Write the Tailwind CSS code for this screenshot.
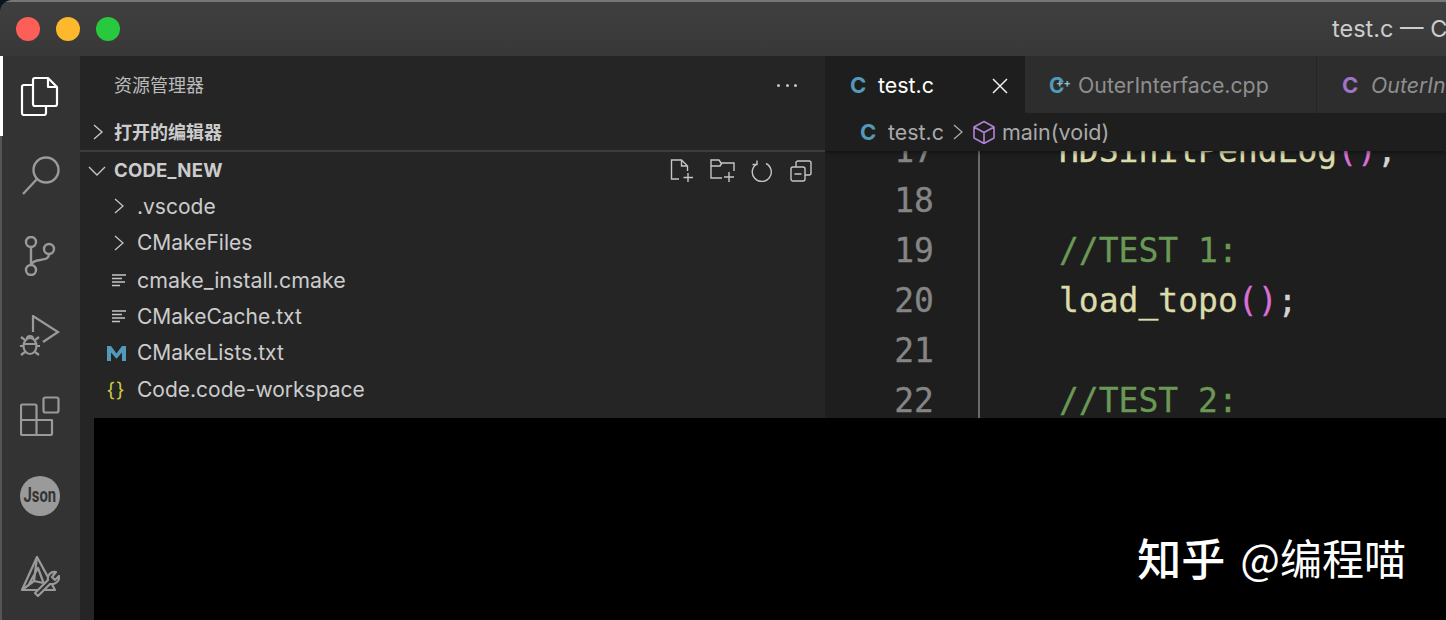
<!DOCTYPE html>
<html lang="zh">
<head>
    <meta charset="utf-8">
    <title>test.c — Code_new</title>
    <script src="https://cdn.jsdelivr.net/npm/@tailwindcss/browser@4"></script>
</head>
<body class="bg-[#0b1220] overflow-hidden">
    <div class="relative w-[1446px] h-[620px] overflow-hidden font-['Inter','Noto_Sans_CJK_SC',sans-serif]">
        <div class="flex flex-col h-full rounded-tl-[12px] overflow-hidden">

            <!-- title bar -->
            <div class="relative h-[56px] shrink-0 bg-gradient-to-b from-[#3f3f3f] to-[#383838] border-t-2 border-[#777] flex items-center">
                <div class="flex gap-[16px] pl-[16px]">
                    <span class="w-[24px] h-[24px] rounded-full bg-[#fb5f57]"></span>
                    <span class="w-[24px] h-[24px] rounded-full bg-[#fdb82e]"></span>
                    <span class="w-[24px] h-[24px] rounded-full bg-[#28c93f]"></span>
                </div>
                <span class="absolute left-[1332px] top-[13px] text-[23.500px] leading-[28px] text-[#cccccc] whitespace-nowrap">test.c — Code_new</span>
            </div>

            <div class="flex flex-1 min-h-0">
                <!-- activity bar -->
                <div class="w-[80px] shrink-0 bg-[#333333] border-l-2 border-[#555] flex flex-col text-[#9a9a9a]">
                    <div class="h-[80px] -ml-[2px] border-l-[3px] border-white flex items-center justify-center text-white">
                        <svg class="w-[40px] h-[40px] -ml-[3px]" viewBox="0 0 40 40" fill="none" stroke="currentColor" stroke-width="2.2" stroke-linejoin="round">
                            <path d="M15 2h13l9 9v17a2 2 0 0 1-2 2H15a2 2 0 0 1-2-2V4a2 2 0 0 1 2-2z"/>
                            <path d="M28 2v9h9"/>
                            <path d="M13 9H4a2 2 0 0 0-2 2v26a2 2 0 0 0 2 2h20a2 2 0 0 0 2-2v-7"/>
                        </svg>
                    </div>
                    <div class="h-[80px] -ml-[2px] flex items-center justify-center">
                        <svg class="w-[40px] h-[40px]" viewBox="0 0 40 40" fill="none" stroke="currentColor" stroke-width="2.4">
                            <circle cx="26" cy="14" r="12.5"/>
                            <path d="M17 23 3 38"/>
                        </svg>
                    </div>
                    <div class="h-[80px] -ml-[2px] flex items-center justify-center">
                        <svg class="w-[40px] h-[40px]" viewBox="0 0 40 40" fill="none" stroke="currentColor" stroke-width="2.4">
                            <circle cx="11" cy="6" r="5"/>
                            <circle cx="29" cy="13" r="5"/>
                            <circle cx="11" cy="34" r="5"/>
                            <path d="M11 11v18M29 18c0 5-4 5-9 6-5 .6-8 2-9 5"/>
                        </svg>
                    </div>
                    <div class="h-[80px] -ml-[2px] flex items-center justify-center">
                        <svg class="w-[40px] h-[42px]" viewBox="0 0 40 42" fill="none" stroke="currentColor" stroke-width="2.2">
                            <path d="M13 17V1l25 16-15 10"/>
                            <ellipse cx="10" cy="31" rx="6.5" ry="8"/>
                            <path d="M4 29h12M5 25 1 22M15 25l4-3M3.500 31H0M16.500 31H20M5 37l-4 3M15 37l4 3M7 24a3 3 0 0 1 6 0"/>
                        </svg>
                    </div>
                    <div class="h-[80px] -ml-[2px] flex items-center justify-center">
                        <svg class="w-[40px] h-[40px]" viewBox="0 0 40 40" fill="none" stroke="currentColor" stroke-width="2.2" stroke-linejoin="round">
                            <rect x="23.500" y="1.500" width="15" height="15" rx="2"/>
                            <path d="M2 8.500h13a1.500 1.500 0 0 1 1.500 1.500v14H1V10a1.500 1.500 0 0 1 1-1.500zM1 24h15.500v15H2.500A1.500 1.500 0 0 1 1 37.500zM16.500 24H32v13.500a1.500 1.500 0 0 1-1.500 1.500h-14z"/>
                        </svg>
                    </div>
                    <div class="h-[80px] -ml-[2px] flex items-center justify-center">
                        <div class="w-[40px] h-[40px] rounded-full bg-[#9a9a9a] flex items-center justify-center text-[#333] text-[19px] font-bold font-['Roboto',sans-serif]">
                            <span class="scale-x-[0.78] scale-y-[1.05]">Json</span>
                        </div>
                    </div>
                    <div class="h-[80px] -ml-[2px] flex items-center justify-center">
                        <svg class="w-[40px] h-[42px]" viewBox="0 0 40 42" fill="none" stroke="currentColor" stroke-width="2.2" stroke-linejoin="round">
                            <path d="M17 2 2 35h33z"/>
                            <path d="M17 2 14 26 2 35M14 26l14 3M9 29l9-16 6 16"/>
                            <path d="M15 38 28 25c-1-5 3-9 8-8l-4 5 3 3 4-4c1 5-4 9-9 8L18 41z" fill="#333"/>
                        </svg>
                    </div>
                </div>

                <!-- explorer -->
                <div class="w-[745px] shrink-0 bg-[#252526] flex flex-col text-[#cccccc]">
                    <div class="h-[58px] shrink-0 flex items-center justify-between pl-[34px] pr-[28px]">
                        <span class="text-[18px] text-[#bbbbbb]">资源管理器</span>
                        <span class="flex gap-[5.500px]">
                            <i class="w-[3px] h-[3px] rounded-full bg-[#c5c5c5]"></i>
                            <i class="w-[3px] h-[3px] rounded-full bg-[#c5c5c5]"></i>
                            <i class="w-[3px] h-[3px] rounded-full bg-[#c5c5c5]"></i>
                        </span>
                    </div>
                    <div class="h-[38px] shrink-0 flex items-center pl-[11px] gap-[9px] border-b-2 border-[#3c3c3c]">
                        <svg class="w-[14px] h-[16px]" viewBox="0 0 14 16" fill="none" stroke="#c5c5c5" stroke-width="1.400"><path d="M3 1l8 7-8 7"/></svg>
                        <span class="text-[18px] font-bold">打开的编辑器</span>
                    </div>
                    <div class="h-[36px] shrink-0 flex items-center pl-[8px] pr-[13px] pt-[2px]">
                        <svg class="w-[18px] h-[12px]" viewBox="0 0 18 12" fill="none" stroke="#c5c5c5" stroke-width="1.400"><path d="M1 2l8 8 8-8"/></svg>
                        <span class="ml-[8px] text-[18.600px] font-bold tracking-[0.2px]">CODE_NEW</span>
                        <span class="ml-auto flex items-center gap-[15px] text-[#c5c5c5]">
                            <svg class="w-[24px] h-[24px] mr-[1px]" viewBox="0 0 24 24" fill="none" stroke="currentColor" stroke-width="1.400">
                                <path d="M9 20H1.500V1h10l6 6v5M11.500 1v6h6M18 14v9M13.500 18.500H23"/>
                            </svg>
                            <svg class="w-[26px] h-[24px]" viewBox="0 0 26 24" fill="none" stroke="currentColor" stroke-width="1.400">
                                <path d="M12 19H1V1h8l2 3h13v8M1 7h9l2-3M19 13v10M14 18h10"/>
                            </svg>
                            <svg class="w-[22px] h-[22px]" viewBox="0 0 22 22" fill="none" stroke="currentColor" stroke-width="1.400">
                                <path d="M15 3.500a9.500 9.500 0 1 1-9 .3M6 .5v4h-4.500"/>
                            </svg>
                            <svg class="w-[22px] h-[22px] ml-[2px]" viewBox="0 0 22 22" fill="none" stroke="currentColor" stroke-width="1.400">
                                <rect x="1" y="7" width="14" height="14" rx="2"/>
                                <path d="M6 7V3a2 2 0 0 1 2-2h11a2 2 0 0 1 2 2v10a2 2 0 0 1-2 2h-4M4.500 14h7"/>
                            </svg>
                        </span>
                    </div>

                    <!-- file rows -->
                    <div class="flex items-center h-[36.700px] pl-[33px]">
                        <svg class="w-[12px] h-[16px]" viewBox="0 0 12 16" fill="none" stroke="#c5c5c5" stroke-width="1.300"><path d="M2 1l8 7-8 7"/></svg>
                        <span class="ml-[12px] text-[21px]">.vscode</span>
                    </div>
                    <div class="flex items-center h-[36.700px] pl-[33px]">
                        <svg class="w-[12px] h-[16px]" viewBox="0 0 12 16" fill="none" stroke="#c5c5c5" stroke-width="1.300"><path d="M2 1l8 7-8 7"/></svg>
                        <span class="ml-[12px] text-[21px]">CMakeFiles</span>
                    </div>
                    <div class="flex items-center h-[36.700px] pl-[32px]">
                        <svg class="w-[14px] h-[14px]" viewBox="0 0 14 14" stroke="#c5c5c5" stroke-width="1.500"><path d="M0 2h14M0 5.500h10M0 9h13M0 12.500h8"/></svg>
                        <span class="ml-[11px] text-[21.400px]">cmake_install.cmake</span>
                    </div>
                    <div class="flex items-center h-[36.700px] pl-[32px]">
                        <svg class="w-[14px] h-[14px]" viewBox="0 0 14 14" stroke="#c5c5c5" stroke-width="1.500"><path d="M0 2h14M0 5.500h10M0 9h13M0 12.500h8"/></svg>
                        <span class="ml-[11px] text-[21px]">CMakeCache.txt</span>
                    </div>
                    <div class="flex items-center h-[36.700px] pl-[27px]">
                        <svg class="w-[19px] h-[15px]" viewBox="0 0 19 14" preserveAspectRatio="none" fill="#519aba"><path d="M0 0h4l5.500 7L15 0h4v14h-4V6l-5.500 6L4 6v8H0z"/></svg>
                        <span class="ml-[11px] text-[21px]">CMakeLists.txt</span>
                    </div>
                    <div class="flex items-center h-[36.700px] pl-[26px]">
                        <span class="w-[20px] text-center text-[20px] text-[#cbcb41] tracking-[1px]">{}</span>
                        <span class="ml-[11px] text-[21px]">Code.code-workspace</span>
                    </div>
                    <div class="flex items-center h-[36.700px] pl-[44px]">
                        <span class="ml-[13px] text-[21px]">common_h.c</span>
                    </div>
                </div>

                <!-- editor -->
                <div class="flex-1 min-w-0 bg-[#1e1e1e] flex flex-col overflow-hidden">
                    <div class="h-[57px] shrink-0 flex bg-[#252526] text-[22px]">
                        <div class="w-[200px] shrink-0 bg-[#1e1e1e] flex items-center pl-[25px] pt-[2px] text-white">
                            <span class="w-[28px] font-bold text-[#519aba]">C</span>
                            <span class="text-[21.400px]">test.c</span>
                            <svg class="ml-auto mr-[17px] w-[16px] h-[16px]" viewBox="0 0 16 16" stroke="#eeeeee" stroke-width="1.500"><path d="M1 1l14 14M15 1 1 15"/></svg>
                        </div>
                        <div class="w-[292px] shrink-0 bg-[#2d2d2d] flex items-center pl-[24px] pt-[2px] border-r border-[#252526] text-[#8f8f8f]">
                            <span class="w-[29px] font-bold text-[#519aba] relative text-[21px]">C<i class="absolute left-[7px] top-[6px] not-italic text-[11px] leading-[14px] text-[#8fbdd1]">++</i></span>
                            <span class="text-[21.300px]">OuterInterface.cpp</span>
                        </div>
                        <div class="flex-1 bg-[#2d2d2d] flex items-center pl-[25px] pt-[2px] text-[#8f8f8f] whitespace-nowrap">
                            <span class="w-[29px] font-bold text-[#a074c4]">C</span>
                            <span class="text-[21.300px] italic">OuterInterface.h</span>
                        </div>
                    </div>
                    <div class="relative z-10 h-[38px] shrink-0 bg-[#1e1e1e] flex items-center pl-[35px] text-[#a9a9a9] shadow-[0_2px_4px_rgba(0,0,0,0.4)]">
                        <span class="w-[28px] text-[22px] font-bold text-[#519aba]">C</span>
                        <span class="text-[21.400px]">test.c</span>
                        <svg class="ml-[8px] w-[12px] h-[16px]" viewBox="0 0 12 16" fill="none" stroke="#a9a9a9" stroke-width="1.300"><path d="M2 1l8 7-8 7"/></svg>
                        <svg class="ml-[8px] w-[24px] h-[24px]" viewBox="0 0 24 24" fill="none" stroke="#b180d7" stroke-width="1.600" stroke-linejoin="round">
                            <path d="M12 1.500 22 7v11l-10 5.500L2 18V7zM2 7l10 5.500L22 7M12 12.500v11"/>
                        </svg>
                        <span class="ml-[6px] text-[21.500px]">main(void)</span>
                    </div>
                    <div class="-mt-[25px] flex font-['DejaVu_Sans_Mono',monospace] text-[33px] leading-[50px] [-webkit-text-stroke:0.3px]">
                        <div class="w-[109px] shrink-0 text-[#858585] text-right">
                            <div>17</div>
                            <div>18</div>
                            <div>19</div>
                            <div>20</div>
                            <div>21</div>
                            <div>22</div>
                        </div>
                        <div class="ml-[44px] border-l-2 border-[#6a6a6a] pl-[79px] whitespace-nowrap">
                            <div class="text-[#dcdcaa]">HDSinitPendLog<span class="text-[#da70d6]">()</span><span class="text-[#d4d4d4]">;</span></div>
                            <div>&nbsp;</div>
                            <div class="text-[#6a9955]">//TEST 1:</div>
                            <div class="text-[#dcdcaa]">load_topo<span class="text-[#da70d6]">()</span><span class="text-[#d4d4d4]">;</span></div>
                            <div>&nbsp;</div>
                            <div class="text-[#6a9955]">//TEST 2:</div>
                        </div>
                    </div>
                </div>
            </div>
        </div>

        <!-- watermark block over the window -->
        <div class="absolute left-[94px] top-[418px] right-0 bottom-0 bg-black flex items-center justify-end gap-[15px] pr-[40px] pt-[81px] text-white leading-none font-['Noto_Sans_CJK_SC',sans-serif]">
            <span class="text-[44px] font-medium -translate-y-[3px] whitespace-nowrap">知乎</span>
            <span class="text-[42px] -translate-y-[3px] whitespace-nowrap">@编程喵</span>
        </div>
    </div>
</body>
</html>
